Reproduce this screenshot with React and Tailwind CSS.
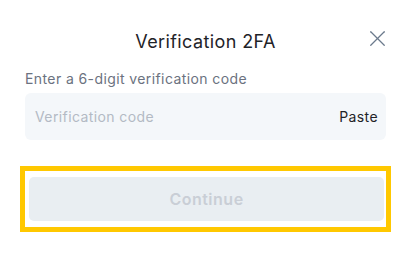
import { X } from "lucide-react";

export default function App() {
  return (
    <div className="w-[411px] h-[259px] bg-white font-['Inter',sans-serif] relative">
      <div className="flex items-center justify-center pt-[29px] h-[53px]">
        <h2 className="text-[18px] font-normal text-[#1f2328] tracking-[0.4px]">
          Verification 2FA
        </h2>
      </div>
      <button className="absolute right-[20px] top-[25px] text-[#6b7a8c]">
        <X size={27} strokeWidth={1.1} />
      </button>

      <div className="px-[25px] mt-[17px]">
        <p className="text-[14px] text-[#6b7280] leading-[18px] tracking-[0.4px]">
          Enter a 6-digit verification code
        </p>
        <div className="mt-[5px] h-[47px] rounded-[6px] bg-[#f4f7fa] flex items-center justify-between pl-[10px] pr-[8px]">
          <span className="text-[14px] text-[#b3bac4] tracking-[0.4px]">Verification code</span>
          <span className="text-[14px] text-[#1f2328] tracking-[0.4px]">Paste</span>
        </div>
      </div>

      <div className="mx-[20px] mt-[26px] border-[5px] border-[#ffc800] pt-[6px] pb-[6px] pl-[4px] pr-[2px]">
        <button className="w-full h-[44px] rounded-[5px] bg-[#e9eef2] text-[16px] font-semibold text-[#c9ced6] tracking-[0.5px]">
          Continue
        </button>
      </div>
    </div>
  );
}
